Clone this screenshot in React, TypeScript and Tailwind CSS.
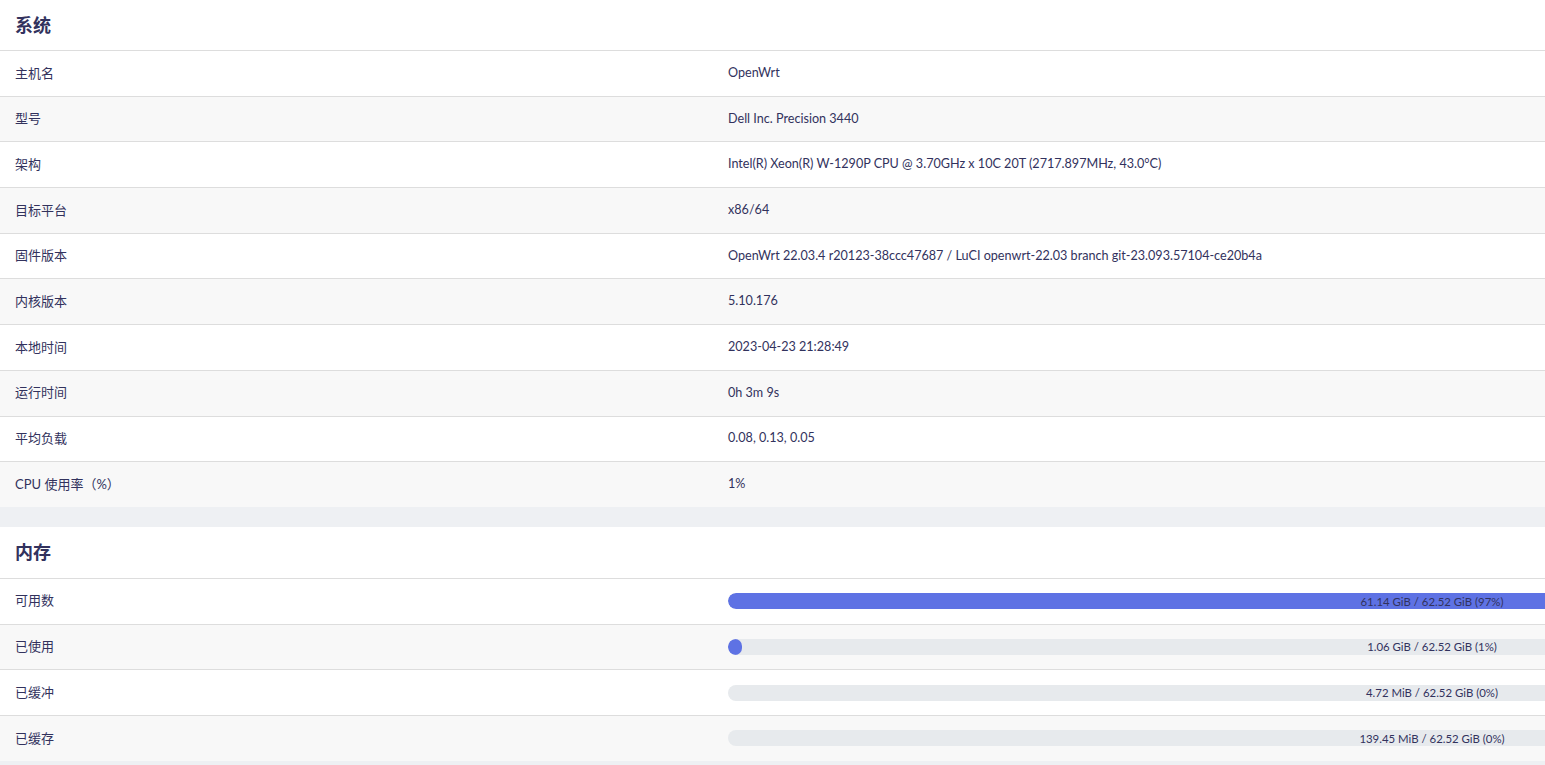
import React from "react";

const sys: [string, string][] = [
  ["主机名", "OpenWrt"],
  ["型号", "Dell Inc. Precision 3440"],
  ["架构", "Intel(R) Xeon(R) W-1290P CPU @ 3.70GHz x 10C 20T (2717.897MHz, 43.0°C)"],
  ["目标平台", "x86/64"],
  ["固件版本", "OpenWrt 22.03.4 r20123-38ccc47687 / LuCI openwrt-22.03 branch git-23.093.57104-ce20b4a"],
  ["内核版本", "5.10.176"],
  ["本地时间", "2023-04-23 21:28:49"],
  ["运行时间", "0h 3m 9s"],
  ["平均负载", "0.08, 0.13, 0.05"],
  ["CPU 使用率（%）", "1%"],
];

const mem: [string, number, string][] = [
  ["可用数", 97, "61.14 GiB / 62.52 GiB (97%)"],
  ["已使用", 1, "1.06 GiB / 62.52 GiB (1%)"],
  ["已缓冲", 0, "4.72 MiB / 62.52 GiB (0%)"],
  ["已缓存", 0, "139.45 MiB / 62.52 GiB (0%)"],
];

const font = { fontFamily: "Lato, 'Noto Sans CJK SC', sans-serif" };

function Row({ i, label, children }: { i: number; label: string; children: React.ReactNode }) {
  return (
    <div
      className={`flex h-[45.7px] items-center border-t border-[#dddddd] ${i % 2 === 1 ? "bg-[#f8f8f8]" : "bg-white"}`}
    >
      <div className="w-[728px] shrink-0 pl-[15px] text-[13px] text-[#32325d]">{label}</div>
      <div className="flex-1 text-[12.6px] text-[#32325d] whitespace-nowrap">{children}</div>
    </div>
  );
}

function Bar({ pct, text }: { pct: number; text: string }) {
  return (
    <div className="relative h-[16px] w-[1408px] rounded-full bg-[#e7eaed] overflow-hidden">
      <div
        className="absolute left-0 top-0 h-full rounded-full bg-[#5e72e4]"
        style={{ width: pct === 0 ? 0 : `max(${pct}%, 14px)` }}
      />
      <div className="absolute inset-0 flex items-center justify-center text-[11.4px] leading-none text-[#32325d]">
        {text}
      </div>
    </div>
  );
}

export default function App() {
  return (
    <div className="w-[1545px] h-[765px] overflow-hidden bg-[#eef0f3]" style={font}>
      <div className="bg-white">
        <div className="h-[50px] flex items-center pl-[15px] text-[18px] font-bold text-[#32325d]">系统</div>
        {sys.map(([l, v], i) => (
          <Row key={l} i={i} label={l}>
            {v}
          </Row>
        ))}
      </div>
      <div className="h-[20px]" />
      <div className="bg-white">
        <div className="h-[51px] flex items-center pl-[15px] text-[18px] font-bold text-[#32325d]">内存</div>
        {mem.map(([l, p, t], i) => (
          <Row key={l} i={i} label={l}>
            <Bar pct={p} text={t} />
          </Row>
        ))}
      </div>
    </div>
  );
}
